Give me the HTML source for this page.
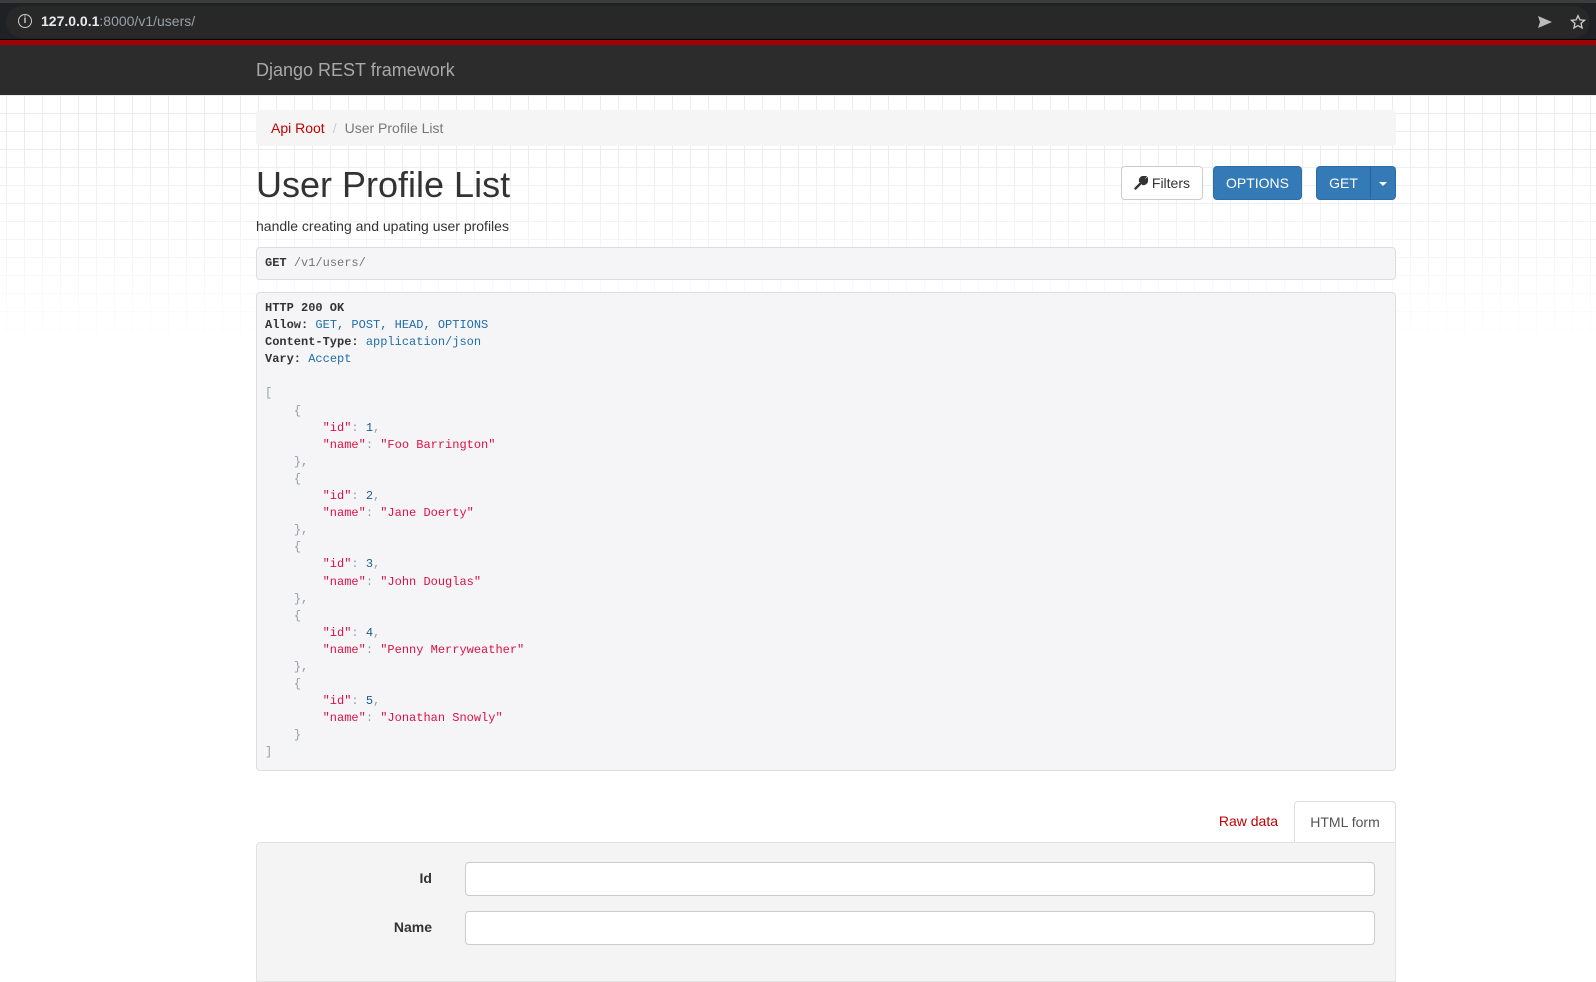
<!DOCTYPE html>
<html><head><meta charset="utf-8"><style>
*{box-sizing:border-box;margin:0;padding:0}
html,body{width:1596px;height:954px;overflow:hidden;background:#fff;font-family:"Liberation Sans",sans-serif;font-size:14px;color:#333}
.chrome{position:absolute;left:0;top:0;width:1596px;height:39px;background:#202124;border-top:3px solid #3c3c3c}
.omni{position:absolute;left:6px;top:3px;width:1584px;height:32px;background:#282828;border-radius:16px}
.omni .i{position:absolute;left:12px;top:8px;width:14px;height:14px;border:1.5px solid #ccc;border-radius:50%;color:#ccc;font-size:10px;line-height:11px;text-align:center;font-weight:bold}
.omni .u{position:absolute;left:35px;top:7px;font-size:14px;color:#9aa0a6}
.omni .u b{color:#e8eaed;font-weight:bold}
.red{position:absolute;top:39px;left:0;width:1596px;height:6px;background:#a30000;border-top:1px solid #000}
.nav{position:absolute;top:45px;left:0;width:1596px;height:50px;background:#2c2c2c}
.brand{position:absolute;left:256px;top:15px;font-size:18px;color:#a8a8a8}
.grid{position:absolute;top:95px;left:0;width:1596px;height:260px;
background-image:linear-gradient(#ececec 1px,transparent 1px),linear-gradient(90deg,#ececec 1px,transparent 1px);background-size:18px 18px;background-position:6px 0;
-webkit-mask-image:linear-gradient(#000 20%,transparent);mask-image:linear-gradient(#000 20%,transparent)}
.c{position:absolute;left:256px;width:1140px}
.bc{top:110px;height:36px;background:#f5f5f5;border-radius:4px;padding:9px 15px;line-height:18px}
.bc a{color:#c20000;text-decoration:none}
.bc .s{color:#ccc;padding:0 8px}
.bc .act{color:#777}
h1{position:absolute;left:256px;top:163px;font-size:36px;font-weight:normal;color:#333;line-height:44px}
.desc{position:absolute;left:256px;top:218px;font-size:14px}
.btn{position:absolute;top:166px;height:34px;border-radius:4px;font-size:14px;line-height:32px;text-align:center}
.bf{left:1121px;width:82px;border:1px solid #ccc;background:#fff;color:#333}
.bo{left:1213px;width:89px;background:#337ab7;border:1px solid #2e6da4;color:#fff}
.bg{left:1316px;width:55px;background:#337ab7;border:1px solid #2e6da4;color:#fff;border-radius:4px 0 0 4px}
.bd{left:1370px;width:26px;background:#337ab7;border:1px solid #2e6da4;border-left-color:#2a6396;border-radius:0 4px 4px 0}
.bd:after{content:"";position:absolute;left:8px;top:15px;border:4px solid transparent;border-top-color:#fff;border-bottom:0}
pre{font-family:"Liberation Mono",monospace;font-size:12px;line-height:17.1px;background:#f5f5f7;border:1px solid #ddd;border-radius:4px;padding:7px 8px;color:#333;white-space:pre}
.req{top:247px;height:33px}
.resp{top:292px;height:479px}
pre b{font-weight:bold}
.m{color:#777}.l{color:#1f6ea9}.p{color:#93a1a1}.s1{color:#dd1144}.n{color:#195f91}
.tabs{position:absolute;top:801px;left:256px;width:1140px;height:41px}
.t1{position:absolute;right:118px;top:12px;color:#c20000}
.t2{position:absolute;right:0;top:0;width:102px;height:42px;background:#fff;border:1px solid #ddd;border-bottom:none;border-radius:4px 4px 0 0;text-align:center;line-height:40px;color:#555}
.well{position:absolute;top:842px;left:256px;width:1140px;height:140px;background:#f4f4f4;border:1px solid #e3e3e3;border-radius:4px 0 0 0}
.lbl{position:absolute;right:963px;font-weight:bold;line-height:16px}
.inp{position:absolute;left:208px;width:910px;height:34px;background:#fff;border:1px solid #ccc;border-radius:4px}
</style></head><body>
<div class="chrome"><div class="omni"><div class="i">i</div><div class="u"><b>127.0.0.1</b>:8000/v1/users/</div>
<svg style="position:absolute;left:1531px;top:9px" width="16" height="14" viewBox="0 0 16 14"><path d="M1 1 L15 7 L1 13 L3 7 Z" fill="#bbb"/></svg>
<svg style="position:absolute;left:1564px;top:8px" width="16" height="16" viewBox="0 0 24 24"><path d="M12 2.5l2.9 6.3 6.9.7-5.2 4.6 1.5 6.8L12 17.4l-6.1 3.5 1.5-6.8L2.2 9.5l6.9-.7z" fill="none" stroke="#ccc" stroke-width="2"/></svg>
</div></div>
<div class="red"></div>
<div class="nav"><div class="brand">Django REST framework</div></div>
<div class="grid"></div>
<div class="c bc"><a>Api Root</a><span class="s">/</span><span class="act">User Profile List</span></div>
<h1>User Profile List</h1>
<div class="btn bf"><svg width="14" height="14" viewBox="0 0 14 14" style="vertical-align:-2px"><path d="M1.5 12.5 L7 7 M6 5 A4 4 0 0 1 11 1 L9 3.5 L10.5 5 L13 3 A4 4 0 0 1 9 8" stroke="#333" stroke-width="2.4" fill="#333" stroke-linecap="round"/></svg> Filters</div>
<div class="btn bo">OPTIONS</div>
<div class="btn bg">GET</div>
<div class="btn bd"></div>
<div class="desc">handle creating and upating user profiles</div>
<pre class="c req"><b>GET</b> <span class="m">/v1/users/</span></pre>
<pre class="c resp"><b>HTTP 200 OK</b>
<b>Allow:</b> <span class="l">GET, POST, HEAD, OPTIONS</span>
<b>Content-Type:</b> <span class="l">application/json</span>
<b>Vary:</b> <span class="l">Accept</span>

<span class="p">[</span>
    <span class="p">{</span>
        <span class="s1">"id"</span><span class="p">:</span> <span class="n">1</span><span class="p">,</span>
        <span class="s1">"name"</span><span class="p">:</span> <span class="s1">"Foo Barrington"</span>
    <span class="p">},</span>
    <span class="p">{</span>
        <span class="s1">"id"</span><span class="p">:</span> <span class="n">2</span><span class="p">,</span>
        <span class="s1">"name"</span><span class="p">:</span> <span class="s1">"Jane Doerty"</span>
    <span class="p">},</span>
    <span class="p">{</span>
        <span class="s1">"id"</span><span class="p">:</span> <span class="n">3</span><span class="p">,</span>
        <span class="s1">"name"</span><span class="p">:</span> <span class="s1">"John Douglas"</span>
    <span class="p">},</span>
    <span class="p">{</span>
        <span class="s1">"id"</span><span class="p">:</span> <span class="n">4</span><span class="p">,</span>
        <span class="s1">"name"</span><span class="p">:</span> <span class="s1">"Penny Merryweather"</span>
    <span class="p">},</span>
    <span class="p">{</span>
        <span class="s1">"id"</span><span class="p">:</span> <span class="n">5</span><span class="p">,</span>
        <span class="s1">"name"</span><span class="p">:</span> <span class="s1">"Jonathan Snowly"</span>
    <span class="p">}</span>
<span class="p">]</span></pre>
<div class="tabs"><span class="t1">Raw data</span><div class="t2">HTML form</div></div>
<div class="well">
<div class="lbl" style="top:27px">Id</div><div class="inp" style="top:19px"></div>
<div class="lbl" style="top:76px">Name</div><div class="inp" style="top:68px"></div>
</div>
</body></html>
